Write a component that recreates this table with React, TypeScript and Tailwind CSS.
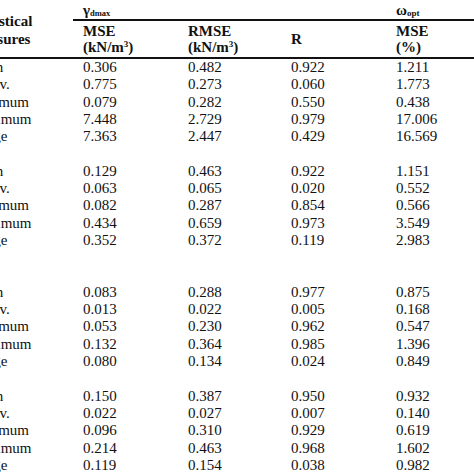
const groups: { gap: number; rows: string[][] }[] = [
  {
    gap: 0,
    rows: [
      ["0.306", "0.482", "0.922", "1.211"],
      ["0.775", "0.273", "0.060", "1.773"],
      ["0.079", "0.282", "0.550", "0.438"],
      ["7.448", "2.729", "0.979", "17.006"],
      ["7.363", "2.447", "0.429", "16.569"],
    ],
  },
  {
    gap: 1,
    rows: [
      ["0.129", "0.463", "0.922", "1.151"],
      ["0.063", "0.065", "0.020", "0.552"],
      ["0.082", "0.287", "0.854", "0.566"],
      ["0.434", "0.659", "0.973", "3.549"],
      ["0.352", "0.372", "0.119", "2.983"],
    ],
  },
  {
    gap: 2,
    rows: [
      ["0.083", "0.288", "0.977", "0.875"],
      ["0.013", "0.022", "0.005", "0.168"],
      ["0.053", "0.230", "0.962", "0.547"],
      ["0.132", "0.364", "0.985", "1.396"],
      ["0.080", "0.134", "0.024", "0.849"],
    ],
  },
  {
    gap: 1,
    rows: [
      ["0.150", "0.387", "0.950", "0.932"],
      ["0.022", "0.027", "0.007", "0.140"],
      ["0.096", "0.310", "0.929", "0.619"],
      ["0.214", "0.463", "0.968", "1.602"],
      ["0.119", "0.154", "0.038", "0.982"],
    ],
  },
];

const labels = ["Mean", "St.dev.", "Minimum", "Maximum", "Range"];

function Unit({ children }: { children: React.ReactNode }) {
  return (
    <div>
      (kN/m<span className="text-[9px] leading-none align-[5px]">3</span>)
      {children}
    </div>
  );
}

export default function App() {
  return (
    <div className="w-[474px] h-[474px] overflow-hidden bg-white text-[#111] font-['Liberation_Serif',serif]">
      <div className="ml-[-31px] w-[505px]">
        {/* header */}
        <div className="flex h-[59px] border-b-2 border-[#111]">
          <div className="w-[104px] pt-[3px] flex flex-col justify-center font-bold text-[15px] leading-[18px] whitespace-nowrap">
            <div>Statistical</div>
            <div>Measures</div>
          </div>
          <div className="flex-1 flex flex-col">
            <div className="h-[21px] border-b-2 border-[#111] pt-[2px] grid grid-cols-[105px_103px_105px_1fr] font-bold text-[15px] leading-[17px]">
              <div className="col-span-3 pl-[10px]">
                γ<span className="text-[8.5px] leading-none align-[-1px]">dmax</span>
              </div>
              <div className="pl-[10px]">
                ω<span className="text-[9px] leading-none align-[-1px]">opt</span>
              </div>
            </div>
            <div className="flex-1 grid grid-cols-[105px_103px_105px_1fr] font-bold text-[15px] leading-[16px] whitespace-nowrap">
              <div className="pl-[10px] flex flex-col justify-center">
                <div>MSE</div>
                <Unit />
              </div>
              <div className="pl-[10px] flex flex-col justify-center">
                <div>RMSE</div>
                <Unit />
              </div>
              <div className="pl-[10px] flex flex-col justify-center">
                <div>R</div>
              </div>
              <div className="pl-[10px] flex flex-col justify-center">
                <div>MSE</div>
                <div>(%)</div>
              </div>
            </div>
          </div>
        </div>

        {/* body */}
        <div className="text-[15px] leading-[17.3px]">
          {groups.map((g, gi) => (
            <div key={gi}>
              {Array.from({ length: g.gap }).map((_, i) => (
                <div key={i} className="h-[17.3px]" />
              ))}
              {g.rows.map((r, ri) => (
                <div
                  key={ri}
                  className="h-[17.3px] grid grid-cols-[104px_105px_103px_105px_1fr] whitespace-nowrap"
                >
                  <div>{labels[ri]}</div>
                  {r.map((v, ci) => (
                    <div key={ci} className="pl-[10px]">
                      {v}
                    </div>
                  ))}
                </div>
              ))}
            </div>
          ))}
        </div>
      </div>
    </div>
  );
}
